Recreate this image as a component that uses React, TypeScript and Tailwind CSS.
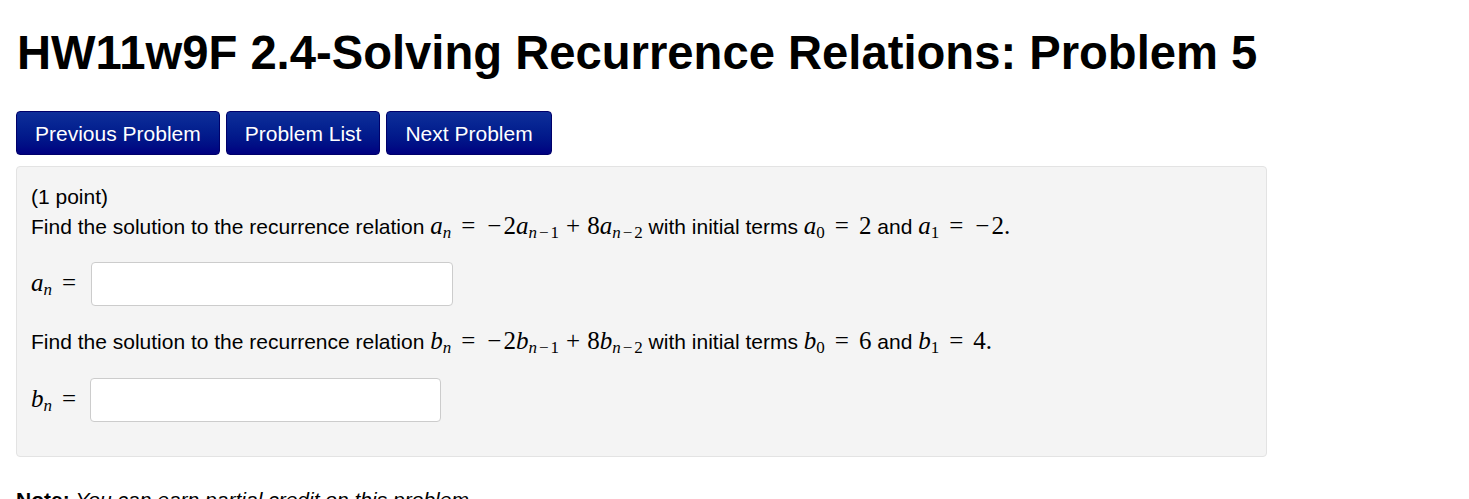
import React from "react";

const M = ({ children }: { children: React.ReactNode }) => (
  <span className="font-['Liberation_Serif',serif] text-[25px] leading-none">{children}</span>
);
const V = ({ v, sub }: { v: string; sub?: string }) => (
  <span>
    <i>{v}</i>
    {sub && (
      <span className="text-[17px] relative top-[4px] align-baseline">
        {sub.split("").map((c, i) =>
          c === "n" ? (
            <i key={i}>n</i>
          ) : c === "−" ? (
            <span key={i} className="mx-[2px]">−</span>
          ) : (
            <span key={i}>{c}</span>
          )
        )}
      </span>
    )}
  </span>
);
const Eq = () => <span className="mx-[10px]">=</span>;
const Plus = () => <span className="mx-[7px]">+</span>;
const Neg = () => <span className="mx-[2px]">−</span>;

function Button({ children }: { children: React.ReactNode }) {
  return (
    <button className="h-[44px] px-[18px] rounded-[4px] border border-[#00006a] bg-gradient-to-b from-[#0f2f9a] to-[#000080] text-white text-[21px] leading-none">
      {children}
    </button>
  );
}

export default function App() {
  return (
    <div className="font-['Liberation_Sans',Arial,sans-serif] text-black bg-white min-h-[499px] px-4">
      <h1 className="pt-[25px] text-[47.2px] font-bold leading-[56px] pl-[1px]">
        HW11w9F 2.4-Solving Recurrence Relations: Problem 5
      </h1>
      <div className="flex gap-[6px] mt-[30px]">
        <Button>Previous Problem</Button>
        <Button>Problem List</Button>
        <Button>Next Problem</Button>
      </div>
      <div className="mt-[11px] w-[1251px] h-[291px] bg-[#f4f4f4] border border-[#e3e3e3] rounded-[4px] px-[14px] pt-[15px] text-[21px] leading-[30px]">
        <div>(1 point)</div>
        <div>
          Find the solution to the recurrence relation{" "}
          <M>
            <V v="a" sub="n" />
            <Eq />
            <Neg />2<V v="a" sub="n−1" />
            <Plus />8<V v="a" sub="n−2" />
          </M>{" "}
          with initial terms{" "}
          <M>
            <V v="a" sub="0" />
            <Eq />2
          </M>{" "}
          and{" "}
          <M>
            <V v="a" sub="1" />
            <Eq />
            <Neg />2.
          </M>
        </div>
        <div className="flex items-center mt-[20px]">
          <span className="w-[60px]">
            <M>
              <V v="a" sub="n" />
              <Eq />
            </M>
          </span>
          <div className="w-[362px] h-[44px] bg-white border border-[#cccccc] rounded-[4px]" />
        </div>
        <div className="mt-[21px]">
          Find the solution to the recurrence relation{" "}
          <M>
            <V v="b" sub="n" />
            <Eq />
            <Neg />2<V v="b" sub="n−1" />
            <Plus />8<V v="b" sub="n−2" />
          </M>{" "}
          with initial terms{" "}
          <M>
            <V v="b" sub="0" />
            <Eq />6
          </M>{" "}
          and{" "}
          <M>
            <V v="b" sub="1" />
            <Eq />4.
          </M>
        </div>
        <div className="flex items-center mt-[21px]">
          <span className="w-[59px]">
            <M>
              <V v="b" sub="n" />
              <Eq />
            </M>
          </span>
          <div className="w-[351px] h-[44px] bg-white border border-[#cccccc] rounded-[4px]" />
        </div>
      </div>
      <div className="mt-[28px] text-[21px] leading-[30px]">
        <b>Note:</b> <i>You can earn partial credit on this problem.</i>
      </div>
    </div>
  );
}
